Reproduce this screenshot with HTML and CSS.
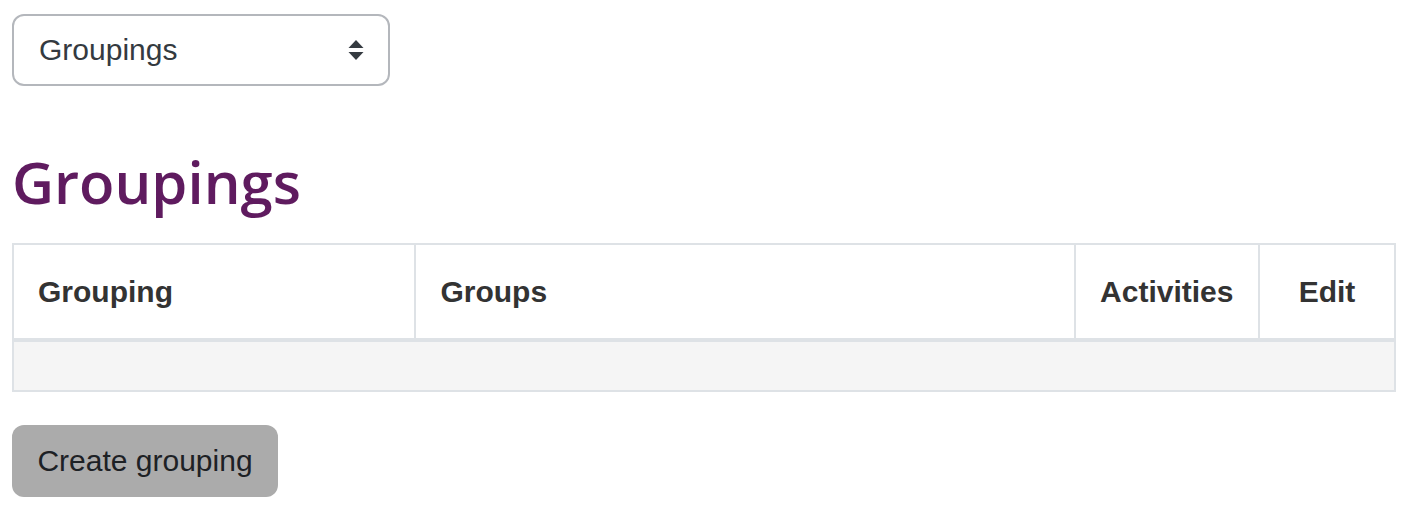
FILE: index.html
```html
<!DOCTYPE html>
<html>
<head>
<meta charset="utf-8">
<link rel="stylesheet" href="styles.css">
</head>
<body>
<div class="page">
  <div class="select">
    <span class="select-label">Groupings</span>
    <svg class="select-arrow" width="16" height="22" viewBox="0 0 16 22"><path d="M8 1 L15.5 9 H0.5 Z M0.5 13 H15.5 L8 21 Z" fill="#343a40"/></svg>
  </div>
  <h2 class="title">Groupings</h2>
  <table class="groupings">
    <thead>
      <tr>
        <th class="col-grouping">Grouping</th>
        <th class="col-groups">Groups</th>
        <th class="col-activities">Activities</th>
        <th class="col-edit">Edit</th>
      </tr>
    </thead>
    <tbody>
      <tr class="empty"><td colspan="4"></td></tr>
    </tbody>
  </table>
  <button class="btn">Create grouping</button>
</div>
</body>
</html>
```
FILE: styles.css
```css
html, body {
  margin: 0;
  padding: 0;
  background: #fff;
}
body {
  font-family: "Liberation Sans", Arial, sans-serif;
  color: #1d2125;
}
.page {
  padding: 14px 20px 0 12px;
}
.select {
  box-sizing: border-box;
  width: 378px;
  height: 72px;
  border: 2px solid #b4b7bc;
  border-radius: 12px;
  display: flex;
  align-items: center;
  justify-content: space-between;
  padding: 0 24px 0 25px;
  font-size: 30px;
  color: #343a40;
}
.select-label {
  padding-bottom: 0;
}
.title {
  font-family: "Open Sans", sans-serif;
  font-weight: 600;
  font-size: 58px;
  line-height: 70px;
  color: #5f1b5f;
  margin: 61px 0 0 0;
  letter-spacing: 0;
}
.groupings {
  width: 100%;
  border-collapse: collapse;
  margin-top: 26px;
  font-size: 30px;
}
.groupings th {
  height: 96px;
  border: 2px solid #dee2e6;
  border-bottom-width: 4px;
  text-align: left;
  padding: 0 24px;
  color: #333;
  font-weight: bold;
  box-sizing: border-box;
}
.col-grouping { width: 403px; }
.col-groups { width: 661px; }
.col-activities { width: 184px; }
.col-edit { width: 136px; text-align: center !important; }
.groupings td {
  height: 51px;
  box-sizing: border-box;
  background: #f5f5f5;
  border: 2px solid #dee2e6;
  padding: 0;
}
.btn {
  margin-top: 33px;
  height: 72px;
  width: 266px;
  border: none;
  border-radius: 12px;
  background: #ababab;
  font-family: "Liberation Sans", Arial, sans-serif;
  font-size: 30px;
  color: #1d2125;
  padding: 0;
}
```
